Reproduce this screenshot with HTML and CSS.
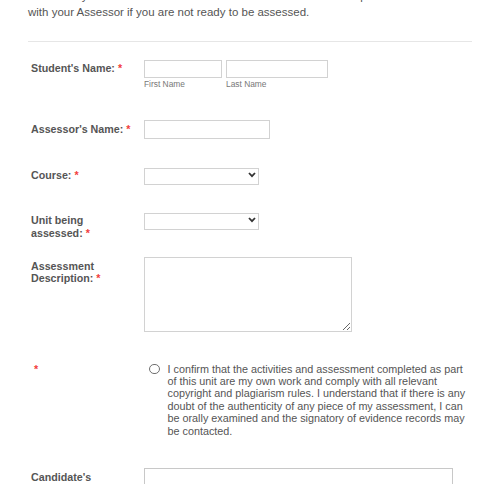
FILE: index.html
```html
<!DOCTYPE html>
<html lang="en">
<head>
<meta charset="utf-8">
<title>Assessment Submission</title>
<link rel="stylesheet" href="styles.css">
</head>
<body>
<div class="page">
  <p class="intro">Please only submit this form once all of the unit activities are complete. Please check<br>with your Assessor if you are not ready to be assessed.</p>
  <div class="divider"></div>

  <form class="form">
    <div class="row gap-30">
      <div class="label">Student's Name:<span class="req">*</span></div>
      <div class="control">
        <div class="name-fields">
          <div class="name-field">
            <input class="input first" type="text">
            <span class="sublabel">First Name</span>
          </div>
          <div class="name-field">
            <input class="input last" type="text">
            <span class="sublabel">Last Name</span>
          </div>
        </div>
      </div>
    </div>

    <div class="row gap-28">
      <div class="label">Assessor's Name:<span class="req">*</span></div>
      <div class="control"><input class="input assessor" type="text"></div>
    </div>

    <div class="row gap-28">
      <div class="label">Course:<span class="req">*</span></div>
      <div class="control">
        <div class="select">
          <select><option></option></select>
          <svg class="chev" width="8" height="6" viewBox="0 0 8 6"><polyline points="1,1 4,4.2 7,1" fill="none" stroke="#333" stroke-width="1.8"/></svg>
        </div>
      </div>
    </div>

    <div class="row gap-18">
      <div class="label">Unit being assessed:<span class="req">*</span></div>
      <div class="control">
        <div class="select">
          <select><option></option></select>
          <svg class="chev" width="8" height="6" viewBox="0 0 8 6"><polyline points="1,1 4,4.2 7,1" fill="none" stroke="#333" stroke-width="1.8"/></svg>
        </div>
      </div>
    </div>

    <div class="row gap-30">
      <div class="label">Assessment Description:<span class="req">*</span></div>
      <div class="control"><textarea class="textarea"></textarea></div>
    </div>

    <div class="row gap-31">
      <div class="label label-flush"><span class="req">*</span></div>
      <div class="control">
        <label class="confirm">
          <input class="radio" type="radio" name="confirm">
          <span class="confirm-text">I confirm that the activities and assessment completed as part of this unit are my own work and comply with all relevant copyright and plagiarism rules. I understand that if there is any doubt of the authenticity of any piece of my assessment, I can be orally examined and the signatory of evidence records may be contacted.</span>
        </label>
      </div>
    </div>

    <div class="row">
      <div class="label label-cand">Candidate's Signature:<span class="req">*</span></div>
      <div class="control"><div class="signature"></div></div>
    </div>
  </form>
</div>
</body>
</html>
```
FILE: styles.css
```css
html, body {
  margin: 0;
  padding: 0;
  background: #fff;
}

body {
  font-family: "Liberation Sans", Arial, sans-serif;
  color: #555;
  overflow: hidden;
  height: 484px;
}

.page {
  width: 444px;
  padding-left: 28px;
}

.intro {
  margin: -12.5px 0 0;
  font-size: 11.5px;
  line-height: 16.5px;
  color: #555;
  white-space: nowrap;
}

.divider {
  border-top: 1px solid #e6e6e6;
  margin: 20px 0 18px;
}

.form {
  padding-left: 3px;
}

.row {
  display: flex;
  align-items: flex-start;
}

.gap-18 { margin-bottom: 18px; }
.gap-28 { margin-bottom: 28px; }
.gap-30 { margin-bottom: 30.5px; }
.gap-31 { margin-bottom: 31px; }

.label {
  flex: 0 0 103px;
  margin-right: 10px;
  box-sizing: border-box;
  padding-top: 2.5px;
  font-size: 10.7px;
  line-height: 12.4px;
  font-weight: bold;
  color: #555;
}

.label-flush {
  padding-top: 0;
}

.label-cand {
  padding-top: 3.3px;
}

.req {
  color: #f23c3c;
  margin-left: 3px;
  font-weight: bold;
}

.control {
  display: flex;
  flex-direction: column;
}

.input {
  box-sizing: border-box;
  height: 18.4px;
  margin: 0;
  padding: 0 4px;
  border: 1px solid #d2d2d2;
  background: #fff;
  border-radius: 0;
  outline: none;
}

.first { width: 78px; }
.last { width: 102px; }
.assessor { width: 126px; }

.name-fields {
  display: flex;
  gap: 4px;
}

.name-field {
  display: flex;
  flex-direction: column;
}

.sublabel {
  margin-top: 1px;
  font-size: 8.4px;
  line-height: 11px;
  color: #777;
}

.select {
  position: relative;
  width: 115px;
  height: 17px;
}

.select select {
  appearance: none;
  -webkit-appearance: none;
  box-sizing: border-box;
  width: 115px;
  height: 17px;
  margin: 0;
  border: 1px solid #d2d2d2;
  border-radius: 0;
  background: #fff;
  outline: none;
}

.chev {
  position: absolute;
  right: 3px;
  top: 5.5px;
  pointer-events: none;
}

.textarea {
  box-sizing: border-box;
  width: 208px;
  height: 75px;
  margin: 0;
  border: 1px solid #d2d2d2;
  border-radius: 0;
  outline: none;
  display: block;
}

.confirm {
  display: flex;
  align-items: flex-start;
}

.radio {
  appearance: none;
  -webkit-appearance: none;
  box-sizing: border-box;
  width: 10.5px;
  height: 10.5px;
  margin: 1px 8px 0 5px;
  border: 1px solid #707070;
  border-radius: 50%;
  background: #fff;
  flex: 0 0 auto;
}

.confirm-text {
  width: 300px;
  font-size: 10.8px;
  line-height: 12.4px;
  color: #555;
}

.signature {
  box-sizing: border-box;
  width: 309px;
  height: 60px;
  border: 1px solid #c8c8c8;
  background: #fff;
}
```
